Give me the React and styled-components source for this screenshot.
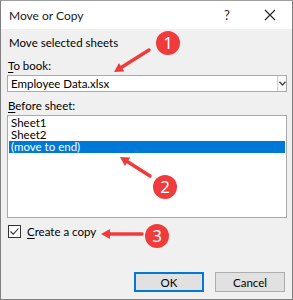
import React from "react";
import styled, { createGlobalStyle } from "styled-components";

const Global = createGlobalStyle`
  html, body {
    margin: 0;
    padding: 0;
    background: #ffffff;
  }
  body {
    font-family: "Segoe UI", Lato, "Noto Sans", sans-serif;
    font-size: 11.5px;
    color: #000;
  }
`;

const Frame = styled.div`
  position: relative;
  width: 293px;
  height: 300px;
  box-sizing: border-box;
  border: 1px solid #7f7f7f;
  border-top-color: #a0a0a0;
  display: flex;
  flex-direction: column;
  overflow: hidden;
`;

const TitleBar = styled.div`
  height: 28px;
  background: #ffffff;
  display: flex;
  align-items: center;
  padding-left: 8px;
  flex-shrink: 0;
`;

const Title = styled.div`
  flex: 1;
  font-size: 12px;
  color: #1a1a1a;
`;

const TitleButton = styled.div`
  width: ${(p) => p.w}px;
  display: flex;
  align-items: center;
  justify-content: center;
  color: #222;
`;

const Body = styled.div`
  flex: 1;
  background: #f0f0f0;
  padding: 6px 6px 0 6px;
  display: flex;
  flex-direction: column;
`;

const Label = styled.div`
  line-height: 15px;
  padding-left: ${(p) => p.indent || 1}px;
  margin-top: ${(p) => p.top || 0}px;
  white-space: nowrap;
`;

const Key = styled.span`
  text-decoration: underline;
  text-underline-offset: 2px;
`;

const Combo = styled.div`
  margin-top: 2px;
  height: 17px;
  box-sizing: border-box;
  border: 1px solid #a9a9a9;
  background: #fff;
  display: flex;
  align-items: stretch;
  width: 280px;
`;

const ComboText = styled.div`
  flex: 1;
  padding-left: 3px;
  line-height: 15px;
`;

const ComboButton = styled.div`
  width: 8px;
  border-left: 1px solid #cfcfcf;
  display: flex;
  align-items: center;
  justify-content: center;
  background: #f7f7f7;
`;

const List = styled.div`
  margin-top: 2px;
  width: 280px;
  height: 103px;
  box-sizing: border-box;
  border: 1px solid #a9a9a9;
  background: #fff;
  padding: 1px 1px;
`;

const Item = styled.div`
  height: 12px;
  line-height: 12px;
  padding-left: 2px;
  background: ${(p) => (p.selected ? "#0078d7" : "transparent")};
  color: ${(p) => (p.selected ? "#ffffff" : "#000")};
`;

const CheckRow = styled.div`
  margin-top: 7px;
  display: flex;
  align-items: center;
  gap: 6px;
  padding-left: 1px;
  line-height: 13px;
`;

const Box = styled.div`
  width: 13px;
  height: 13px;
  box-sizing: border-box;
  border: 1px solid #333;
  background: #fff;
  display: flex;
  align-items: center;
  justify-content: center;
`;

const Footer = styled.div`
  margin-top: auto;
  margin-bottom: 7px;
  display: flex;
  justify-content: flex-end;
  gap: 11px;
  padding-right: 1px;
`;

const Button = styled.div`
  width: 70px;
  height: 20px;
  box-sizing: border-box;
  border: ${(p) => (p.primary ? "2px solid #0078d7" : "1px solid #adadad")};
  background: #e1e1e1;
  display: flex;
  align-items: center;
  justify-content: center;
`;

const Overlay = styled.svg`
  position: absolute;
  left: -1px;
  top: -1px;
  pointer-events: none;
`;

const red = "#ef3b3b";

function Badge({ x, y, n }) {
  return (
    <g>
      <circle cx={x} cy={y} r="12" fill={red} />
      <text
        x={x}
        y={y + 6}
        textAnchor="middle"
        fill="#fff"
        fontSize="17"
        fontFamily="'Segoe UI', 'Noto Sans', 'Liberation Sans', sans-serif"
      >
        {n}
      </text>
    </g>
  );
}

function Arrow({ x1, y1, x2, y2 }) {
  const a = Math.atan2(y2 - y1, x2 - x1);
  const len = 9;
  const w = 5;
  const bx = x2 - len * Math.cos(a);
  const by = y2 - len * Math.sin(a);
  const px = -Math.sin(a) * w;
  const py = Math.cos(a) * w;
  return (
    <g>
      <line
        x1={x1}
        y1={y1}
        x2={bx}
        y2={by}
        stroke={red}
        strokeWidth="3.5"
        strokeLinecap="round"
      />
      <polygon
        points={`${x2},${y2} ${bx + px},${by + py} ${bx - px},${by - py}`}
        fill={red}
      />
    </g>
  );
}

export default function App() {
  return (
    <>
      <Global />
      <Frame>
        <TitleBar>
          <Title>Move or Copy</Title>
          <TitleButton w={42}>
            <span style={{ fontSize: 13 }}>?</span>
          </TitleButton>
          <TitleButton w={44}>
            <svg width="12" height="12" viewBox="0 0 12 12">
              <path d="M1 1 L11 11 M11 1 L1 11" stroke="#222" strokeWidth="1.1" />
            </svg>
          </TitleButton>
        </TitleBar>
        <Body>
          <Label indent={2}>Move selected sheets</Label>
          <Label top={8}>
            <Key>T</Key>o book:
          </Label>
          <Combo>
            <ComboText>Employee Data.xlsx</ComboText>
            <ComboButton>
              <svg width="7" height="5" viewBox="0 0 7 5">
                <path d="M0.5 0.8 L3.5 4 L6.5 0.8" fill="none" stroke="#444" strokeWidth="1.3" />
              </svg>
            </ComboButton>
          </Combo>
          <Label top={6}>
            <Key>B</Key>efore sheet:
          </Label>
          <List>
            <Item>Sheet1</Item>
            <Item>Sheet2</Item>
            <Item selected>(move to end)</Item>
          </List>
          <CheckRow>
            <Box>
              <svg width="11" height="11" viewBox="0 0 11 11">
                <path d="M1.5 5.5 L4.2 8.2 L9.5 2.5" fill="none" stroke="#333" strokeWidth="1.1" />
              </svg>
            </Box>
            <span>
              <Key>C</Key>reate a copy
            </span>
          </CheckRow>
          <Footer>
            <Button primary>OK</Button>
            <Button>Cancel</Button>
          </Footer>
        </Body>
        <Overlay width="293" height="300" viewBox="0 0 293 300">
          <Arrow x1={149} y1={50} x2={114} y2={72} />
          <Badge x={168} y={43} n="1" />
          <Arrow x1={150} y1={176} x2={120} y2={157} />
          <Badge x={165} y={187} n="2" />
          <Arrow x1={142} y1={234} x2={101} y2={234} />
          <Badge x={157} y={236} n="3" />
        </Overlay>
      </Frame>
    </>
  );
}
